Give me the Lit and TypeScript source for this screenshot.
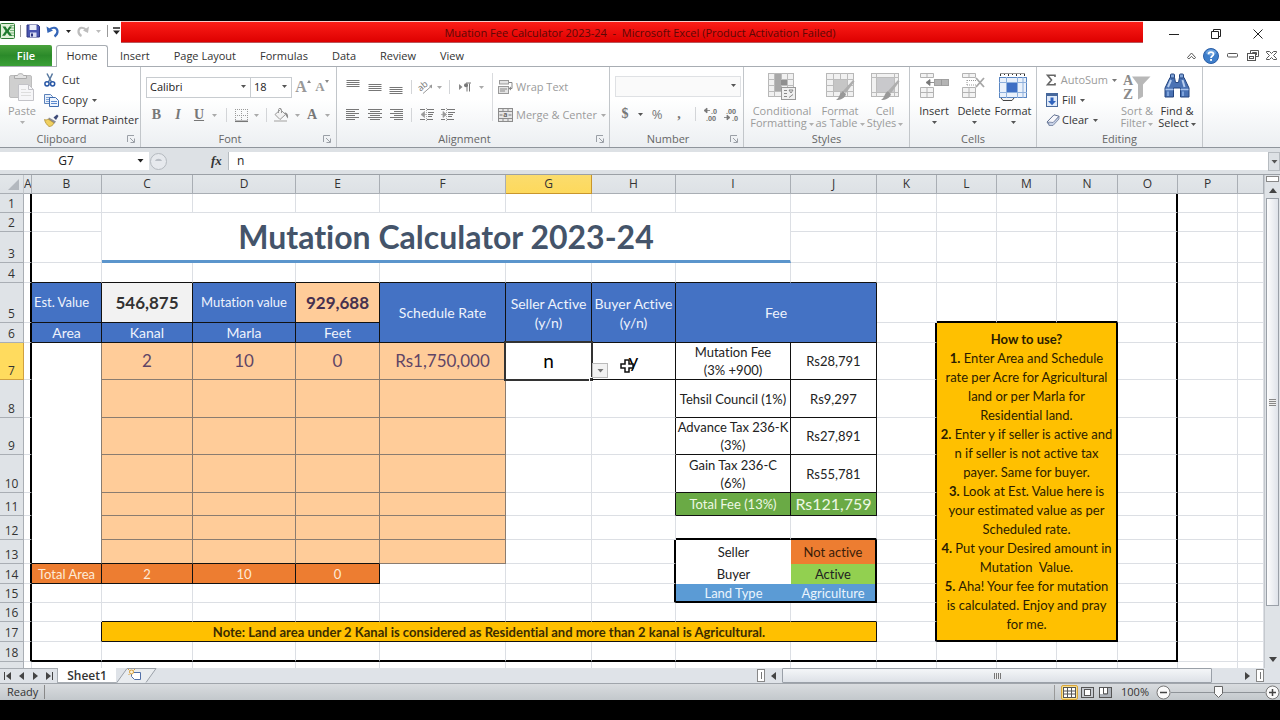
import { LitElement, html, css, svg, nothing } from "lit";
import { customElement } from "lit/decorators.js";
import { classMap } from "lit/directives/class-map.js";

/* ---------- icons ---------- */
const draw = (w: number, h: number, body: unknown) =>
  html`<svg width=${w} height=${h} viewBox="0 0 ${w} ${h}" fill="none" aria-hidden="true">${body}</svg>`;

const caret = (color = "#555") => draw(7, 4, svg`<path d="M0.500 0h6L3.500 3.600z" fill=${color} />`);
const smallCaret = (color = "#555") => draw(5, 3, svg`<path d="M0 0h5L2.500 3z" fill=${color} />`);
const hline = (x: number, y: number, w: number, c = "#777") => svg`<path d="M${x} ${y + 0.5}h${w}" stroke=${c} />`;

const alignIcon = (widths: number[], mode: "l" | "c" | "r", top: number) =>
  draw(14, 14, widths.map((w, i) => hline(mode === "l" ? 0 : mode === "c" ? (14 - w) / 2 : 14 - w, top + i * 2, w)));

const icons = {
  excel: draw(16, 16, svg`
    <rect x="0.5" y="0.5" width="14" height="15" rx="1" fill="#dff0d8" stroke="#2c7a34" />
    <path d="M10 2.5h4M10 5h4M10 7.5h4M10 10h4M10 12.500h4" stroke="#79b27c" />
    <path d="M2.500 3.500h3l1.800 3 2-3h2.600L8.700 8l3.500 4.800H9.300L7 9.700l-2 3.100H2L5.500 8z" fill="#1f7a2e" />`),
  save: draw(14, 14, svg`
    <path d="M1 1h11l1.500 1.500V13H1z" fill="#4a56b0" stroke="#2d3580" />
    <rect x="3.500" y="1" width="7" height="5" fill="#eef1fb" />
    <rect x="4" y="8.500" width="6.500" height="4.500" fill="#d8dcf2" /><rect x="5" y="9.500" width="2" height="3" fill="#2d3580" />`),
  undo: draw(14, 14, svg`
    <path d="M3 6.500C6 2.500 11 3 11.500 7c.2 2.500-1 4-3 5.500" stroke="#3566b8" stroke-width="2.200" />
    <path d="M0.500 2.500l1 6.500 5.500-2.500z" fill="#3566b8" />`),
  redo: draw(14, 14, svg`
    <path d="M10.500 6.500C7.500 2.500 3 3 2.500 7c-.2 2.500 1 4 3 5" stroke="#bdbdbd" stroke-width="2.200" />
    <path d="M13 2.500L12 9 7 6.500z" fill="#bdbdbd" />`),
  customize: draw(7, 8, svg`<path d="M0 1h7" stroke="#222" stroke-width="1.500" /><path d="M0 3.500h7L3.500 7.500z" fill="#222" />`),
  winMin: draw(10, 10, svg`<path d="M0 5.500h10" stroke="#222" />`),
  winMax: draw(10, 10, svg`<path d="M0.500 2.500h7v7h-7zM2.500 2.500v-2h7v7h-2" stroke="#222" />`),
  winClose: draw(10, 10, svg`<path d="M0.500 0.500l9 9M9.500 0.500l-9 9" stroke="#222" />`),
  chevUp: draw(9, 8, svg`<path d="M0.500 5.500L4.500 1l4 4.500-1.300 1.500-2.700-2.700L1.800 7z" stroke="#555" />`),
  help: draw(16, 16, svg`
    <circle cx="8" cy="8" r="7.500" fill="#3f7fcb" stroke="#2b5ea6" />
    <ellipse cx="8" cy="4.500" rx="5" ry="3" fill="#7fb0e6" opacity="0.700" />
    <path d="M5.500 6.200C5.500 3.400 10.500 3.400 10.500 6.200 10.500 8 8 8 8 10" stroke="#fff" stroke-width="1.700" />
    <rect x="7.100" y="11" width="1.900" height="1.900" fill="#fff" />`),
  docMin: draw(11, 5, svg`<rect x="0.500" y="0.500" width="10" height="3.500" rx="1" stroke="#555" />`),
  docMax: draw(12, 11, svg`<path d="M3.500 3.500v-3h8v6h-3" stroke="#555" /><path d="M5.500 3v-.5h4V5" stroke="#555" /><rect x="0.500" y="3.500" width="8" height="7" stroke="#555" fill="#fff" /><rect x="2.500" y="6.500" width="4" height="2" stroke="#555" />`),
  docClose: draw(11, 9, svg`<path d="M0.500 0.500h3l2 2 2-2h3v1l-3 3 3 3v1h-3l-2-2-2 2h-3v-1l3-3-3-3z" stroke="#555" />`),
  paste: draw(26, 28, svg`
    <rect x="0.500" y="2.500" width="22" height="22" rx="1.500" fill="#cfcfcf" stroke="#bdbdbd" />
    <path d="M5.500 5.500v-3h3C9 0 14 0 14.500 2.500h3v3z" fill="#e2e2e2" stroke="#aaa" />
    <path d="M9.500 11.500h10l5 5v11h-15z" fill="#f6f6f8" stroke="#c3c3c8" /><path d="M19.500 11.500v5h5" stroke="#c3c3c8" />
    <path d="M12 16.500h5M12 19.500h10M12 22.500h10" stroke="#ddd" />`),
  cut: draw(12, 14, svg`
    <path d="M3 0.500L7.500 9M8.500 0.500L4.500 9" stroke="#56779f" stroke-width="1.500" />
    <circle cx="3" cy="10.800" r="2.100" stroke="#2857a6" stroke-width="1.500" /><circle cx="8.600" cy="10.800" r="2.100" stroke="#2857a6" stroke-width="1.500" />`),
  copy: draw(15, 13, svg`
    <path d="M0.500 0.500h6l2 2v7h-8z" fill="#e8f0fb" stroke="#5c82ba" /><path d="M2 3.500h4M2 5.500h4M2 7.500h4" stroke="#7ea2d6" />
    <path d="M5.500 3.500h6l3 3v6h-9z" fill="#eef4fd" stroke="#3f6cb0" /><path d="M7 7.500h6M7 9.500h6" stroke="#5d8bd0" />`),
  painter: draw(15, 13, svg`
    <path d="M9.500 3.500L13 0.500l1.500 1.500L12 6z" fill="#3d4a78" />
    <path d="M5 3.500l7 4-1.500 2L4 5.500z" fill="#8c8c94" />
    <path d="M4 5l6 4c-1 2.500-3 3.500-5 3.500C3 11 1 8.500 0.500 5.500 2 6 3 6 4 5z" fill="#f0d060" stroke="#a8862c" stroke-width="0.700" />`),
  borders: draw(13, 13, svg`<path d="M0.500 0v12M6.500 0v12M12.500 0v12M0 0.500h13M0 6.500h13" stroke="#9a9a9a" stroke-dasharray="1 1" /><path d="M0 12.300h13" stroke="#777" stroke-width="1.500" />`),
  fill: draw(15, 14, svg`
    <path d="M1 6.500L6.500 1.500l5 5-5.500 5z" fill="#f2f2f2" stroke="#999" /><path d="M4.500 5V1.500C4.500 0 7.500 0 7.500 1.500V5" stroke="#999" />
    <path d="M10.500 4.500c3 0 4 2.500 3.500 6-1.500-1-2-3-2.500-4z" fill="#8c8c8c" /><path d="M0 13h13" stroke="#ccc" stroke-width="2" />`),
  orient: draw(18, 14, svg`
    <text x="1" y="9" font-size="9" fill="#777" transform="rotate(-40 6 7)">ab</text>
    <path d="M6 13.500L14 6.500" stroke="#999" /><path d="M15 4.500v4l-3-2.500z" fill="#999" />`),
  rtl: draw(14, 11, svg`
    <path d="M0 2v6l3.500-3z" fill="#888" /><path d="M8 1.500v8M10.500 1.500v8M7 1h5" stroke="#777" /><circle cx="7" cy="3.200" r="2" fill="#777" />`),
  outdent: draw(14, 14, svg`<path d="M0 1.500h5M7 1.500h7M8 4.500h6M8 6.500h5M8 8.500h4M0 11.500h5M7 11.500h6" stroke="#777" /><path d="M4.500 3.500L1 6.500l3.500 3zM4 6.500h3" fill="#999" stroke="#999" stroke-width="0.700" /><path d="M6.500 0v14" stroke="#aaa" stroke-dasharray="1 1" />`),
  indent: draw(14, 14, svg`<path d="M0 1.500h4M6 1.500h8M7 4.500h7M7 6.500h5M7 8.500h4M0 11.500h4M6 11.500h7" stroke="#777" /><path d="M2 3.500l3.500 3-3.500 3zM0 6.500h3" fill="#999" stroke="#999" stroke-width="0.700" /><path d="M5.500 0v14" stroke="#aaa" stroke-dasharray="1 1" />`),
  wrap: draw(15, 14, svg`
    <rect x="1.500" y="0.500" width="9" height="3.500" fill="#e4e4e4" stroke="#999" /><rect x="0.500" y="6.500" width="10" height="7" fill="#e4e4e4" stroke="#999" />
    <path d="M2 9h7M2 11h5" stroke="#888" /><path d="M11 2.500h3v6h-2" stroke="#888" /><path d="M13 6.500v4l-2.500-2z" fill="#888" />`),
  merge: draw(15, 14, svg`
    <rect x="0.500" y="0.500" width="14" height="13" fill="#e6e6e6" stroke="#8c8c8c" /><path d="M0 3.500h15M0 10.500h15M5 0v3.500M10 0v3.500M5 10.500v3.500M10 10.500v3.500" stroke="#8c8c8c" />
    <path d="M1.500 7h3M10.500 7h3" stroke="#777" /><text x="5.200" y="9.200" font-size="7" font-weight="700" fill="#666">a</text>`),
  condfmt: draw(28, 28, svg`
    <rect x="0.500" y="0.500" width="25" height="23" fill="#f1f1f1" stroke="#b8b8b8" /><path d="M0 6.500h26M0 12.500h26M0 18.500h26M6.500 0v24M13.500 0v24M19.500 0v24" stroke="#bcbcbc" />
    <rect x="7" y="1" width="6" height="17" fill="#a8a8a8" /><rect x="13" y="7" width="6" height="5" fill="#8f8f8f" />
    <rect x="13.500" y="14.500" width="14" height="12" fill="#efefef" stroke="#999" /><path d="M16 17.500h3M21 17h4l-2 3zM16 20.500h3M16 23.500h3M21 24.500l4-3" stroke="#888" />`),
  fmttable: draw(29, 28, svg`
    <rect x="0.500" y="0.500" width="27" height="23" fill="#f1f1f1" stroke="#b8b8b8" /><path d="M0 6.500h28M0 12.500h28M0 18.500h28M7.500 0v24M14.500 0v24M21.500 0v24" stroke="#bcbcbc" />
    <rect x="8" y="7" width="13" height="11" fill="#c6c6c6" />
    <path d="M27 7l1.500 1.500L20 20l-3-2z" fill="#aeaeae" /><path d="M17 18l3 3c-1 4-5 6-10 6 4-2 3-7 7-9z" fill="#989898" />`),
  cellstyles: draw(29, 28, svg`
    <rect x="0.500" y="0.500" width="27" height="23" fill="#f1f1f1" stroke="#b8b8b8" /><path d="M0 4.500h28M0 19.500h28M5.500 0v24M23.500 0v24" stroke="#bcbcbc" />
    <rect x="6" y="5" width="17" height="14" fill="#c9c9cc" />
    <path d="M27 7l1.500 1.500L20 20l-3-2z" fill="#aeaeae" /><path d="M17 18l3 3c-1 4-5 6-10 6 4-2 3-7 7-9z" fill="#989898" />`),
  insert: draw(29, 26, svg`
    <path d="M0.500 0.500h13v4h-13zM7 0.500v4M0.500 14.500h13v10h-13zM7 14.500v10M0.500 19.500h13" fill="#f3f3f3" stroke="#b3b3b3" />
    <rect x="14.500" y="6.500" width="14" height="6" fill="#b4b4b4" stroke="#a0a0a0" /><path d="M21.500 6.500v6" stroke="#999" /><path d="M9 9.500h5M6 9.500l4-3v6z" fill="#777" stroke="#777" stroke-width="0.800" />`),
  delete: draw(24, 26, svg`
    <path d="M0.500 0.500h13v4h-13zM7 0.500v4M0.500 14.500h13v10h-13zM7 14.500v10M0.500 19.500h13" fill="#f3f3f3" stroke="#b3b3b3" />
    <path d="M5 7v5M5 7.500h9M5 12h9" stroke="#999" stroke-dasharray="1 1" /><path d="M14 5l8 9M22 5l-8 9" stroke="#a6a6a6" stroke-width="1.800" />`),
  format: draw(29, 28, svg`
    <path d="M1.500 0v3M5.500 0v2M9.500 0v3M13.500 0v2M17.500 0v3M21.500 0v2M25.500 0v3" stroke="#333" /><path d="M1 0.500h25" stroke="#999" />
    <rect x="0.500" y="4.500" width="27" height="20" fill="#eaf1fb" stroke="#5a86c2" /><path d="M0 9.500h28M0 19.500h28M7.500 4v21M18.500 4v21M24 4v21" stroke="#8fb0dc" />
    <rect x="8" y="10" width="10" height="9" fill="#3f6fc4" /><path d="M2 25l2 2.500h9l2-2.500" fill="#f4f4f4" stroke="#444" />`),
  sum: draw(10, 12, svg`<path d="M9 3V1.200H1.500L5.500 6l-4 4.800H9V9" stroke="#666" stroke-width="1.600" />`),
  filldown: draw(12, 14, svg`<rect x="0.500" y="0.500" width="11" height="13" fill="#dfe9f8" stroke="#47689c" /><path d="M1 2h10" stroke="#47689c" stroke-width="2" /><path d="M4.500 4.500h3v3.500H10L6 12.300 2 8h2.500z" fill="#2f63bd" />`),
  eraser: draw(14, 12, svg`<path d="M1 8L8 0.800l5 1.400-6.500 8H2.500z" fill="#f7f7fb" stroke="#5f6f90" /><path d="M2.500 8l4.500.5L13 2.500v2.500L7 11.500H3z" fill="#c8d2e6" stroke="#5f6f90" stroke-width="0.700" />`),
  sort: draw(28, 28, svg`
    <path d="M9 3.500h18.500l-7.500 8v12l-5 3v-15z" fill="#b8b8b8" />
    <text x="0" y="12" font-size="14" font-weight="700" font-family="Liberation Serif, serif" fill="#8a8a8a">A</text>
    <text x="0" y="26" font-size="15" font-weight="700" font-family="Liberation Serif, serif" fill="#8a8a8a">Z</text>`),
  find: draw(28, 26, svg`
    <path d="M7 4.500h4.500l1 5h3l1-5H21l5 10.500v9h-8.500V15h-7v9H2v-9z" fill="#4a72b4" stroke="#24457f" />
    <rect x="7.500" y="1" width="4" height="4" rx="1" fill="#7fa3d8" stroke="#24457f" /><rect x="16.500" y="1" width="4" height="4" rx="1" fill="#7fa3d8" stroke="#24457f" />
    <path d="M8 7l-3 7M19.500 7l2 7" stroke="#b6cdee" stroke-width="2" /><path d="M2.500 16.500h8M17.500 16.500h8" stroke="#a8c2ea" stroke-width="1.500" /><path d="M5 18.500v4.500M20 18.500v4.500" stroke="#7ea3db" stroke-width="2" />`),
  launcher: draw(8, 8, svg`<path d="M0.500 7V0.500H7" stroke="#9a9fa6" /><path d="M3 3l4 4M7.500 3.500v4h-4" stroke="#9a9fa6" />`),
  cancelFx: draw(72, 19, svg`<circle cx="9.500" cy="9.500" r="8" fill="#e6e9ed" stroke="#b4b9bf" /><path d="M6 9c1-3 6-3 7 0z" fill="#b9bec5" />`),
  corner: draw(11, 11, svg`<path d="M11 0v11H0z" fill="#b3b8be" />`),
  newTab: draw(42, 15, svg`
    <path d="M0.500 15L11 0.500h29L30 14.500" fill="#e9ecef" stroke="#9aa0a8" />
    <path d="M15.500 4.500h9v7h-6l-3-3z" fill="#fff" stroke="#5270a8" /><circle cx="15.500" cy="4" r="2" fill="#fff3d6" stroke="#d9a13c" /><path d="M12 1l1.500 1.500M19 1l-1.500 1.500M12.500 7l1-1" stroke="#d9a13c" />`),
  cursor: draw(14, 14, svg`<path d="M5 1h4v4h4v4H9v4H5V9H1V5h4z" fill="#fff" stroke="#111" stroke-width="1.500" />`),
  viewGrid: draw(13, 11, svg`<rect x="0.500" y="0.500" width="12" height="10" fill="#fff" stroke="#555" /><path d="M0 4h13M0 7h13M4.500 0v11M8.500 0v11" stroke="#555" />`),
  viewPage: draw(13, 11, svg`<rect x="0.500" y="0.500" width="12" height="10" fill="#c8ccd1" stroke="#555" /><rect x="3.500" y="2.500" width="6" height="6" fill="#fff" stroke="#555" />`),
  viewBreak: draw(13, 11, svg`<rect x="0.500" y="0.500" width="12" height="10" fill="#aeb3ba" stroke="#555" /><path d="M1 1h3v6H1zM5 1h3v5H5z" fill="#fff" /><path d="M4.500 0v7h4V0" stroke="#555" />`),
  minus: draw(15, 15, svg`<circle cx="7.500" cy="7.500" r="6.500" fill="#fafafa" stroke="#777" /><path d="M4 7.500h7" stroke="#444" stroke-width="1.500" />`),
  plus: draw(15, 15, svg`<circle cx="7.500" cy="7.500" r="6.500" fill="#fafafa" stroke="#777" /><path d="M4 7.500h7M7.500 4v7" stroke="#444" stroke-width="1.500" />`),
  thumb: draw(9, 12, svg`<path d="M0.500 0.500h8v7l-4 4-4-4z" fill="#fafafa" stroke="#666" />`),
  up: draw(8, 5, svg`<path d="M0 5l4-5 4 5z" fill="#444" />`),
  down: draw(8, 5, svg`<path d="M0 0l4 5 4-5z" fill="#444" />`),
  left: draw(5, 8, svg`<path d="M5 0L0 4l5 4z" fill="#444" />`),
  right: draw(5, 8, svg`<path d="M0 0l5 4-5 4z" fill="#444" />`),
  first: draw(7, 8, svg`<path d="M0.500 0v8" stroke="#444" /><path d="M7 0L2 4l5 4z" fill="#444" />`),
  last: draw(7, 8, svg`<path d="M6.500 0v8" stroke="#444" /><path d="M0 0l5 4-5 4z" fill="#444" />`),
  decInc: draw(15, 14, svg`<path d="M1 3.500h5M0 3.500l3-2.500v5z" fill="#777" stroke="#777" stroke-width="0.800" /><text x="7" y="6.500" font-size="7" font-weight="700" fill="#777">.0</text><text x="2" y="13.500" font-size="7" font-weight="700" fill="#777">.00</text>`),
  decDec: draw(15, 14, svg`<text x="2" y="6.500" font-size="7" font-weight="700" fill="#777">.00</text><path d="M0 10.500h4M6 10.500L3 8v5z" fill="#777" stroke="#777" stroke-width="0.800" /><text x="8" y="13.500" font-size="7" font-weight="700" fill="#777">.0</text>`),
};

/* ---------- sheet model ---------- */
const COLS: [string, number][] = [
  ["A", 8], ["B", 70], ["C", 91], ["D", 103], ["E", 84], ["F", 126], ["G", 86], ["H", 84], ["I", 115],
  ["J", 86], ["K", 60], ["L", 60], ["M", 60], ["N", 61], ["O", 60], ["P", 60],
];
const ROWS = [19, 19, 31, 20, 40, 20, 37, 38, 37, 38, 23, 24, 24, 20, 19, 19, 20, 20, 20];

interface Cell { t?: unknown; k?: string; cs?: number; rs?: number }

const howTo = html`<b>How to use?</b>
<b>1.</b> Enter Area and Schedule
rate per Acre for Agricultural
land or per Marla for
Residential land.
<b>2.</b> Enter y if seller is active and
n if seller is not active tax
payer. Same for buyer.
<b>3.</b> Look at Est. Value here is
your estimated value as per
Scheduled rate.
<b>4.</b> Put your Desired amount in
Mutation  Value.
<b>5.</b> Aha! Your fee for mutation
is calculated. Enjoy and pray
for me.`;

const CELLS: Record<string, Cell> = {
  C2: { t: "Mutation Calculator 2023-24", k: "title", cs: 7, rs: 2 },
  B5: { t: "Est. Value", k: "blue compact start" },
  C5: { t: "546,875", k: "est" },
  D5: { t: "Mutation value", k: "blue compact" },
  E5: { t: "929,688", k: "mut" },
  F5: { t: "Schedule Rate", k: "blue", rs: 2 },
  G5: { t: "Seller Active\n(y/n)", k: "blue", rs: 2 },
  H5: { t: "Buyer Active\n(y/n)", k: "blue", rs: 2 },
  I5: { t: "Fee", k: "blue", cs: 2, rs: 2 },
  B6: { t: "Area", k: "blue" },
  C6: { t: "Kanal", k: "blue" },
  D6: { t: "Marla", k: "blue" },
  E6: { t: "Feet", k: "blue" },
  L6: { t: howTo, k: "howto", cs: 3, rs: 12 },
  C7: { t: "2", k: "entry" },
  D7: { t: "10", k: "entry" },
  E7: { t: "0", k: "entry" },
  F7: { t: "Rs1,750,000", k: "entry" },
  G7: {
    t: html`n<span class="selection"></span><span class="handle"></span
      ><button class="picker" aria-label="Pick from list">${caret("#777")}</button>`,
    k: "answer",
  },
  H7: { t: html`y<span class="cursor">${icons.cursor}</span>`, k: "answer" },
  I7: { t: "Mutation Fee\n(3% +900)", k: "fee" },
  J7: { t: "Rs28,791", k: "fee" },
  I8: { t: "Tehsil Council (1%)", k: "fee" },
  J8: { t: "Rs9,297", k: "fee" },
  I9: { t: "Advance Tax 236-K\n(3%)", k: "fee" },
  J9: { t: "Rs27,891", k: "fee" },
  I10: { t: "Gain Tax 236-C\n(6%)", k: "fee" },
  J10: { t: "Rs55,781", k: "fee" },
  I11: { t: "Total Fee (13%)", k: "total" },
  J11: { t: "Rs121,759", k: "total sum" },
  I13: { t: "Seller" },
  J13: { t: "Not active", k: "orange dark" },
  B14: { t: "Total Area", k: "orange" },
  C14: { t: "2", k: "orange" },
  D14: { t: "10", k: "orange" },
  E14: { t: "0", k: "orange" },
  I14: { t: "Buyer" },
  J14: { t: "Active", k: "lime" },
  I15: { t: "Land Type", k: "sky" },
  J15: { t: "Agriculture", k: "sky" },
  C17: { t: "Note: Land area under 2 Kanal is considered as Residential and more than 2 kanal is Agricultural.", k: "note", cs: 8 },
};

/* Border rules per range: b = bottom edge, r = right edge; 0 none, 1 thin, 2 thick, g grey. */
const EDGES: [string, string][] = [
  ["A1:A18", "r2"], ["O1:O18", "r2"], ["B18:O18", "b2"],
  ["B4:J4", "b1"], ["B5:J6", "r1 b1"],
  ["B7:B13", "b0 rg"], ["C7:F13", "rg bg"], ["B13:E13", "b1"],
  ["G7:G7", "b1 rg"], ["H7:H7", "b1"], ["H7:H11", "r1"], ["I7:J11", "r1 b1"],
  ["B14:E14", "r1 b1"],
  ["H13:H15", "r2"], ["I12:J12", "b2"], ["I13:I15", "r0"], ["I13:J14", "b0"], ["J13:J15", "r2"], ["I15:J15", "b2"],
  ["B17:B17", "r1"], ["C16:J16", "b1"], ["C17:C17", "r1 b1"],
  ["K6:K17", "r2"], ["L5:N5", "b2"], ["L6:L6", "r2 b2"],
];

const colIndex = (c: string) => c.charCodeAt(0) - 65;
const parse = (ref: string): [number, number] => [colIndex(ref[0]), Number(ref.slice(1))];

function edgesFor(c: number, r: number) {
  let right = "", bottom = "";
  for (const [range, rule] of EDGES) {
    const [[c1, r1], [c2, r2]] = range.split(":").map(parse);
    if (c < c1 || c > c2 || r < r1 || r > r2) continue;
    for (const e of rule.split(" ")) e[0] === "r" ? (right = e) : (bottom = e);
  }
  return `${right} ${bottom}`;
}

const covered = new Set<string>();
for (const [ref, cell] of Object.entries(CELLS)) {
  const [c, r] = parse(ref);
  for (let y = r; y < r + (cell.rs ?? 1); y++)
    for (let x = c; x < c + (cell.cs ?? 1); x++) if (x !== c || y !== r) covered.add(`${x},${y}`);
}

/* ---------- spreadsheet ---------- */
@customElement("sheet-grid")
class SheetGrid extends LitElement {
  static styles = css`
    :host { display: block; flex: 1; min-width: 0; overflow: hidden; background: #fff; font-variant-ligatures: none; }
    table { width: 100%; table-layout: fixed; border-collapse: separate; border-spacing: 0; font: 13px/18px Lato, "Open Sans", sans-serif; font-variant-ligatures: none; color: #222; }
    .rowcol { width: 24px; }
    th, td { box-sizing: border-box; padding: 0; overflow: hidden; white-space: pre; text-align: center; vertical-align: middle; border: 0 solid #dcdfe4; border-width: 0 1px 1px 0; }
    thead th { height: 19px; background: linear-gradient(#e3e7ea, #dde1e5); border-color: #a9aeb4; font: 12px/16px "Open Sans", sans-serif; color: #333; }
    thead .corner { text-align: right; vertical-align: bottom; line-height: 0; border-right-color: #c3c7cb; padding: 0 4px 3px 0; }
    thead .on { background: linear-gradient(#fbdc6d, #fdd95c); border-color: #c9962c; }
    tbody th { background: #dfe3e7; border-color: #a9aeb4; font: 12px/16px "Open Sans", sans-serif; color: #333; vertical-align: bottom; }
    tbody th.on { background: #ffdb5e; border-color: #d0a040; }
    .r0 { border-right-width: 0; }
    .r1 { border-right-color: #111; }
    .rg { border-right-color: #8a7c70; }
    .r2 { border-right: 2px solid #000; }
    .b0 { border-bottom-width: 0; }
    .b1 { border-bottom-color: #111; }
    .bg { border-bottom-color: #8a7c70; }
    .b2 { border-bottom: 2px solid #000; }
    .title { font-size: 32px; line-height: 40px; font-weight: 700; color: #44546a; border-bottom: 3px solid #5b95cc; }
    .blue { background: #4472c4; color: #eef3fc; font-size: 14px; line-height: 19px; }
    .compact { font-size: 13px; }
    .start { text-align: left; padding-left: 2px; }
    .est { background: #f2f2f2; color: #333; font-size: 17px; font-weight: 700; }
    .mut { background: #ffcc99; color: #46304f; font-size: 17px; font-weight: 700; }
    .peach { background: #ffcc99; }
    .entry { background: #ffcc99; color: #5f4566; font-size: 17px; }
    .answer { font-size: 19px; color: #000; position: relative; overflow: visible; }
    .total { background: #6aaa45; color: #eef8e4; }
    .sum { font-size: 16px; }
    .orange { background: #ed7d31; color: #fdebd8; }
    .dark { color: #3a1c08; }
    .lime { background: #92d050; }
    .sky { background: #5b9bd5; color: #eaf4fd; line-height: 16px; }
    .note { background: #ffc000; color: #3a2c00; font-weight: 700; }
    .howto { background: #ffc000; color: #2b1c00; line-height: 19px; }
    .selection { position: absolute; inset: -2px; border: 2px solid #333; }
    .handle { position: absolute; right: -3px; bottom: -3px; width: 3px; height: 3px; background: #333; border: 1px solid #fff; }
    .picker { position: absolute; left: 100%; bottom: 1px; width: 16px; height: 15px; padding: 0; margin-left: 1px; border: 1px solid #bbb; background: #f2f2f2; display: grid; place-items: center; z-index: 1; }
    .cursor { position: absolute; left: 28px; top: 16px; line-height: 0; }
  `;

  private row(h: number, i: number) {
    const r = i + 1;
    return html`<tr style="height:${h}px">
      <th scope="row" class=${classMap({ on: r === 7 })}>${r}</th>
      ${COLS.map(([name], c) => {
        if (covered.has(`${c},${r}`)) return nothing;
        const cell = CELLS[name + r] ?? {};
        const blank = c >= 2 && c <= 5 && r >= 8 && r <= 13 ? "peach" : "";
        return html`<td class="${cell.k ?? blank} ${edgesFor(c, r)}" colspan=${cell.cs ?? 1} rowspan=${cell.rs ?? 1}>${cell.t ?? nothing}</td>`;
      })}
      <td></td>
    </tr>`;
  }

  render() {
    return html`<table>
      <colgroup>
        <col class="rowcol" />
        ${COLS.map(([, w]) => html`<col style="width:${w}px" />`)}
        <col />
      </colgroup>
      <thead>
        <tr>
          <th class="corner">${icons.corner}</th>
          ${COLS.map(([n]) => html`<th scope="col" class=${classMap({ on: n === "G" })}>${n}</th>`)}
          <th></th>
        </tr>
      </thead>
      <tbody>${ROWS.map((h, i) => this.row(h, i))}</tbody>
    </table>`;
  }
}

/* ---------- ribbon ---------- */
@customElement("excel-ribbon")
class ExcelRibbon extends LitElement {
  static styles = css`
    :host { display: flex; height: 80px; background: linear-gradient(#fff 40%, #eceff2); border-bottom: 1px solid #8f959c; font: 11px/14px "Open Sans", sans-serif; color: #333; }
    button { all: unset; box-sizing: border-box; }
    svg { display: block; overflow: visible; }
    .group { box-sizing: border-box; display: flex; flex-direction: column; border-right: 1px solid #c2c6ca; }
    .body { flex: 1; display: flex; min-height: 0; }
    .label { position: relative; height: 17px; line-height: 17px; text-align: center; color: #666; padding-right: 17px; }
    .label.plain { padding-right: 0; }
    .launch { position: absolute; right: 5px; top: 5px; }
    .clipboard { width: 141px; }
    .font { width: 196px; }
    .alignment { width: 273px; }
    .number { width: 134px; }
    .styles { width: 166px; }
    .cells { width: 127px; }
    .editing { width: 166px; }
    .big { display: flex; flex-direction: column; align-items: center; text-align: center; line-height: 12px; white-space: pre; padding-top: 6px; width: 100%; }
    .big .pic { height: 32px; }
    .big .c { display: inline-block; vertical-align: middle; margin-left: 2px; }
    .off { color: #9b9b9b; }
    .paste { width: 44px; }
    .stack { display: flex; flex-direction: column; padding-top: 3px; }
    .line { display: flex; align-items: center; height: 20px; white-space: nowrap; }
    .line .pic { width: 18px; display: grid; place-items: center start; }
    .line .c { margin-left: 4px; }
    .rows { display: flex; flex-direction: column; gap: 6px; padding: 9px 0 0 5px; }
    .tools { display: grid; align-items: center; justify-items: center; height: 22px; }
    .f1 { grid-template-columns: 105px 41px 22px 16px; }
    .f2 { grid-template-columns: 21px 22px 20px 10px 14px 16px 14px 6px 24px 8px 22px 8px; }
    .a1 { grid-template-columns: 22px 22px 20px 10px 20px 6px 14px 20px 10px; }
    .a2 { grid-template-columns: 22px 22px 20px 10px 22px 20px; }
    .n2 { grid-template-columns: 20px 10px 24px 20px 12px 20px 20px; }
    .combo { position: relative; width: 100%; height: 21px; }
    .combo select { appearance: none; box-sizing: border-box; width: 100%; height: 21px; border: 1px solid #c8ccd0; border-radius: 0; background: #fff; font: inherit; color: #222; padding: 0 3px; opacity: 1; }
    .combo select:disabled { background: #fafafa; border-color: #dfe1e4; }
    .combo .arrow { position: absolute; right: 5px; top: 8px; pointer-events: none; }
    .f1 .combo + .combo select { border-left: 0; }
    .sep { width: 1px; height: 14px; background: #d3d5d8; }
    .tall { width: 1px; height: 48px; margin: 6px 5px 0 6px; background: #d9dbde; }
    .serif { font: 700 14px/16px "Liberation Serif", serif; color: #777; }
    .it { font-style: italic; }
    .un { text-decoration: underline; }
    .grow, .shrink { display: flex; font: 700 16px/20px "Liberation Serif", serif; color: #999; }
    .shrink { font-size: 13px; }
    .sup { padding-top: 3px; }
    .glyph { font-size: 13px; color: #777; }
    .wrapcol { display: flex; flex-direction: column; gap: 6px; padding-top: 9px; }
    .wrapcol .line { height: 22px; }
    .grid-s { display: grid; grid-template-columns: 66px 50px 40px; padding-left: 5px; align-items: start; }
    .grid-c { display: grid; grid-template-columns: 40px 40px 38px; padding-left: 4px; align-items: start; }
    .e-left { width: 80px; box-sizing: border-box; padding-left: 9px; }
    .e-left .pic { width: 16px; }
    .e-btn { width: 40px; }
    .down { margin-top: 4px; }
  `;

  private label(text: string, launcher = true) {
    return html`<div class="label ${launcher ? "" : "plain"}">${text}${launcher ? html`<button class="launch" aria-label="${text} options">${icons.launcher}</button>` : nothing}</div>`;
  }
  private line(icon: unknown, text: string, arrow = "", off = false) {
    return html`<button class="line ${off ? "off" : ""}"><span class="pic">${icon}</span>${text}${arrow ? html`<span class="c">${smallCaret(arrow)}</span>` : nothing}</button>`;
  }
  private big(icon: unknown, lines: string[], off: boolean, below = false) {
    const color = off ? "#b0b0b0" : "#555";
    return html`<button class="big ${off ? "off" : ""}"><span class="pic">${icon}</span><span>${lines[0]}</span>${below
      ? html`<span class="down">${smallCaret(color)}</span>`
      : html`<span>${lines[1]}<span class="c">${smallCaret(color)}</span></span>`}</button>`;
  }

  render() {
    const sep = html`<span class="sep"></span>`;
    const dim = "#aaa";
    return html`
      <section class="group clipboard">
        <div class="body">
          <div class="paste">${this.big(icons.paste, ["Paste"], true, true)}</div>
          <div class="stack">
            ${this.line(icons.cut, "Cut")} ${this.line(icons.copy, "Copy", "#555")} ${this.line(icons.painter, "Format Painter")}
          </div>
        </div>
        ${this.label("Clipboard")}
      </section>
      <section class="group font">
        <div class="body"><div class="rows">
          <div class="tools f1">
            <div class="combo"><select aria-label="Font"><option>Calibri</option></select><span class="arrow">${smallCaret()}</span></div>
            <div class="combo"><select aria-label="Font size"><option>18</option></select><span class="arrow">${smallCaret()}</span></div>
            <button class="grow" aria-label="Grow font">A<span class="sup">${draw(4, 3, svg`<path d="M0 3l2-3 2 3z" fill="#888" />`)}</span></button>
            <button class="shrink" aria-label="Shrink font">A<span class="sup">${draw(4, 3, svg`<path d="M0 0l2 3 2-3z" fill="#888" />`)}</span></button>
          </div>
          <div class="tools f2">
            <button class="serif">B</button><button class="serif it">I</button><button class="serif un">U</button>${smallCaret(dim)}${sep}
            <button aria-label="Borders">${icons.borders}</button>${smallCaret(dim)}${sep}
            <button aria-label="Fill color">${icons.fill}</button>${smallCaret(dim)}
            <button class="serif">A</button>${smallCaret(dim)}
          </div>
        </div></div>
        ${this.label("Font")}
      </section>
      <section class="group alignment">
        <div class="body">
          <div class="rows">
            <div class="tools a1">
              <button aria-label="Top align">${alignIcon([13, 13, 13, 13], "c", 0)}</button>
              <button aria-label="Middle align">${alignIcon([13, 13, 13, 13], "c", 4)}</button>
              <button aria-label="Bottom align">${alignIcon([13, 13, 13, 13], "c", 7)}</button>${sep}
              <button aria-label="Orientation">${icons.orient}</button>${smallCaret(dim)}${sep}
              <button aria-label="Text direction">${icons.rtl}</button>${smallCaret(dim)}
            </div>
            <div class="tools a2">
              <button aria-label="Align left">${alignIcon([13, 9, 13, 9, 13, 9], "l", 1)}</button>
              <button aria-label="Center">${alignIcon([14, 10, 14, 10, 14, 10], "c", 1)}</button>
              <button aria-label="Align right">${alignIcon([13, 9, 13, 9, 13, 9], "r", 1)}</button>${sep}
              <button aria-label="Decrease indent">${icons.outdent}</button>
              <button aria-label="Increase indent">${icons.indent}</button>
            </div>
          </div>
          <span class="tall"></span>
          <div class="wrapcol">
            ${this.line(icons.wrap, "Wrap Text", "", true)} ${this.line(icons.merge, "Merge & Center", dim, true)}
          </div>
        </div>
        ${this.label("Alignment")}
      </section>
      <section class="group number">
        <div class="body"><div class="rows">
          <div class="combo"><select aria-label="Number format" disabled><option></option></select><span class="arrow">${smallCaret()}</span></div>
          <div class="tools n2">
            <button class="serif">$</button>${smallCaret()}<button class="glyph">%</button><button class="serif">,</button>${sep}
            <button aria-label="Increase decimal">${icons.decInc}</button><button aria-label="Decrease decimal">${icons.decDec}</button>
          </div>
        </div></div>
        ${this.label("Number")}
      </section>
      <section class="group styles">
        <div class="body grid-s">
          ${this.big(icons.condfmt, ["Conditional", "Formatting"], true)} ${this.big(icons.fmttable, ["Format", "as Table"], true)}
          ${this.big(icons.cellstyles, ["Cell", "Styles"], true)}
        </div>
        ${this.label("Styles", false)}
      </section>
      <section class="group cells">
        <div class="body grid-c">
          ${this.big(icons.insert, ["Insert"], false, true)} ${this.big(icons.delete, ["Delete"], false, true)}
          ${this.big(icons.format, ["Format"], false, true)}
        </div>
        ${this.label("Cells", false)}
      </section>
      <section class="group editing">
        <div class="body">
          <div class="stack e-left">
            ${this.line(icons.sum, "AutoSum", "#777", true)} ${this.line(icons.filldown, "Fill", "#555")} ${this.line(icons.eraser, "Clear", "#555")}
          </div>
          <div class="e-btn">${this.big(icons.sort, ["Sort &", "Filter"], true)}</div>
          <div class="e-btn">${this.big(icons.find, ["Find &", "Select"], false)}</div>
        </div>
        ${this.label("Editing", false)}
      </section>
    `;
  }
}

/* ---------- window ---------- */
@customElement("app-root")
class AppRoot extends LitElement {
  static styles = css`
    :host { display: flex; flex-direction: column; box-sizing: border-box; height: 100vh; padding: 21px 0 20px; background: #000; font: 11px/14px "Open Sans", sans-serif; color: #333; overflow: hidden; }
    button { all: unset; box-sizing: border-box; }
    svg { display: block; }
    .titlebar { display: flex; height: 24px; background: #fff; }
    .quick { display: grid; grid-template-columns: 16px 8px 18px 22px 8px 22px 8px 10px 8px; align-items: center; justify-items: center; width: 121px; box-sizing: border-box; height: 20px; }
    .vsep { width: 1px; height: 12px; background: #999; }
    .caption { flex: 1; height: 22px; box-sizing: border-box; border-bottom: 1px solid #b8585c; border-top: 1px solid #f7c9c9; background: linear-gradient(#fb1d17, #dd0000); color: #5c0806; text-align: center; padding-left: 16px; line-height: 22px; white-space: pre; }
    .winbtns { display: grid; grid-template-columns: 42px 42px 42px; place-items: center; width: 137px; height: 26px; box-sizing: border-box; padding: 0 0 0 10px; }
    .tabs { display: flex; height: 22px; background: #fff; border-bottom: 1px solid #a8adb3; box-sizing: border-box; }
    .tabs a { color: #333; text-decoration: none; padding: 0 12px; line-height: 21px; }
    .tabs .file { width: 52px; box-sizing: border-box; padding: 0; text-align: center; background: linear-gradient(#4aa23c, #2b8a2a 50%, #3aa036); color: #fff; font-weight: 600; border-radius: 0 2px 0 0; }
    .tabs .home { width: 52px; box-sizing: border-box; padding: 0; height: 22px; margin: 0 0 0 4px; border: 1px solid #a8adb3; border-bottom: 0; border-radius: 3px 3px 0 0; text-align: center; background: #fff; line-height: 20px; }
    .tabtools { margin-left: auto; display: grid; grid-template-columns: 20px 20px 22px 20px 17px; place-items: center; }
    .formula { display: flex; box-sizing: border-box; height: 27px; padding: 4px 0 4px; background: #dde1e5; border-bottom: 1px solid #9ba0a6; }
    .formula input { box-sizing: border-box; border: 0; border-radius: 0; background: #fff; height: 18px; padding: 0; font: 12px/18px "Open Sans", sans-serif; color: #222; }
    .namebox { position: relative; width: 149px; }
    .namebox input { width: 149px; padding-right: 17px; text-align: center; }
    .namebox span { position: absolute; right: 5px; top: 7px; }
    .fx { display: flex; width: 80px; height: 18px; border-right: 1px solid #b6bbc0; box-sizing: border-box; }
    .fx b { font: italic 700 13px/18px "Liberation Serif", serif; margin-left: -10px; }
    .formula .value { flex: 1; min-width: 0; padding-left: 8px; }
    .expand { width: 12px; height: 19px; border: 1px solid #b6bbc0; display: grid; place-items: center; }
    .work { flex: 1; min-height: 0; display: flex; }
    .vscroll { width: 16px; background: #dfe3e7; display: flex; flex-direction: column; align-items: center; border-left: 1px solid #c5c9ce; box-sizing: border-box; }
    .split { width: 13px; height: 6px; border: 1px solid #888; background: #fff; box-sizing: border-box; margin: 1px 0 6px; }
    .vthumb { width: 13px; flex: 1; margin: 5px 0 51px; box-sizing: border-box; border: 1px solid #9aa0a8; background: linear-gradient(90deg, #fdfdfd, #dfe3ea); display: grid; place-items: center; }
    .vthumb i { width: 7px; height: 7px; background: repeating-linear-gradient(#888 0 1px, #eee 1px 2px); }
    .vscroll .dn { margin-bottom: 6px; }
    .bottom { display: flex; height: 15px; background: #dfe3e8; }
    .nav { display: grid; grid-template-columns: repeat(4, 14px); place-items: center; width: 58px; box-sizing: border-box; border-right: 1px solid #a8adb3; border-top: 1px solid #a8adb3; }
    .sheet { box-sizing: border-box; width: 58px; background: #fff; font: 600 12px/15px "Open Sans", sans-serif; text-align: center; border-bottom: 1px solid #a8adb3; }
    .left { display: flex; flex: 1; }
    .hscroll { width: 507px; display: flex; align-items: center; gap: 6px; }
    .hsplit { box-sizing: border-box; width: 8px; height: 13px; border: 1px solid #888; background: #fff; display: grid; place-items: center; }
    .hsplit i { width: 1px; height: 7px; background: #777; }
    .hthumb { box-sizing: border-box; width: 430px; height: 15px; border: 1px solid #9aa0a8; border-radius: 1px; background: linear-gradient(#f4f6f8, #dde1e7); display: grid; place-items: center; }
    .hthumb i { width: 7px; height: 6px; background: repeating-linear-gradient(90deg, #777 0 1px, #eee 1px 2px); }
    .hscroll .rt { margin: 0 0 0 auto; }
    .cornerbox { width: 16px; }
    .status { display: flex; align-items: center; height: 17px; box-sizing: border-box; border-top: 1px solid #a0a5ab; background: linear-gradient(#d9dcdf, #c3c8cc); }
    .ready { width: 45px; box-sizing: border-box; padding-left: 7px; border-right: 1px solid #888; }
    .views { margin-left: auto; display: grid; grid-template-columns: 18px 18px 18px; place-items: center; border-left: 1px solid #999; padding-left: 5px; height: 15px; }
    .views .cur { background: #fbe08a; border: 1px solid #d8a53a; border-radius: 2px; padding: 1px; }
    .pct { width: 42px; text-align: center; }
    .zoomer { display: flex; align-items: center; }
    .track { position: relative; width: 94px; height: 1px; background: #8e9398; }
    .track span { position: absolute; left: 43px; top: -6px; }
    a:focus-visible, button:focus-visible { outline: 1px solid #3566b8; }
  `;

  render() {
    return html`
      <header class="titlebar">
        <div class="quick">
          ${icons.excel}<span class="vsep"></span><button aria-label="Save">${icons.save}</button><button aria-label="Undo">${icons.undo}</button>${smallCaret("#222")}
          <button aria-label="Redo">${icons.redo}</button>${smallCaret("#bbb")}<span class="vsep"></span><button aria-label="Customize">${icons.customize}</button>
        </div>
        <div class="caption">Muation Fee Calculator 2023-24  -  Microsoft Excel (Product Activation Failed)</div>
        <div class="winbtns">
          <button aria-label="Minimize">${icons.winMin}</button><button aria-label="Restore">${icons.winMax}</button><button aria-label="Close">${icons.winClose}</button>
        </div>
      </header>
      <nav class="tabs">
        <a class="file" href="#file">File</a><a class="home" href="#home">Home</a>
        ${["Insert", "Page Layout", "Formulas", "Data", "Review", "View"].map((t) => html`<a href="#tab">${t}</a>`)}
        <div class="tabtools">
          <button aria-label="Collapse ribbon">${icons.chevUp}</button><button aria-label="Help">${icons.help}</button>
          <button aria-label="Minimize workbook">${icons.docMin}</button><button aria-label="Restore workbook">${icons.docMax}</button>
          <button aria-label="Close workbook">${icons.docClose}</button>
        </div>
      </nav>
      <excel-ribbon></excel-ribbon>
      <div class="formula">
        <div class="namebox"><input aria-label="Name box" .value=${"G7"} /><span>${caret("#222")}</span></div>
        <div class="fx">${icons.cancelFx}<b>fx</b></div>
        <input class="value" aria-label="Formula bar" .value=${"n"} />
        <button class="expand" aria-label="Expand formula bar">${caret("#555")}</button>
      </div>
      <main class="work">
        <sheet-grid></sheet-grid>
        <div class="vscroll">
          <span class="split"></span>${icons.up}<span class="vthumb"><i></i></span><span class="dn">${icons.down}</span>
        </div>
      </main>
      <div class="bottom">
        <div class="left">
          <div class="nav">
            <button aria-label="First sheet">${icons.first}</button><button aria-label="Previous sheet">${icons.left}</button>
            <button aria-label="Next sheet">${icons.right}</button><button aria-label="Last sheet">${icons.last}</button>
          </div>
          <button class="sheet">Sheet1</button>
          <button aria-label="New sheet">${icons.newTab}</button>
        </div>
        <div class="hscroll">
          <span class="hsplit"><i></i></span>${icons.left}<span class="hthumb"><i></i></span><span class="rt">${icons.right}</span><span class="hsplit"><i></i></span>
        </div>
        <span class="cornerbox"></span>
      </div>
      <footer class="status">
        <span class="ready">Ready</span>
        <div class="views">
          <button class="cur" aria-label="Normal view">${icons.viewGrid}</button><button aria-label="Page layout view">${icons.viewPage}</button><button aria-label="Page break view">${icons.viewBreak}</button>
        </div>
        <span class="pct">100%</span>
        <div class="zoomer">
          <button aria-label="Zoom out">${icons.minus}</button><span class="track"><span>${icons.thumb}</span></span><button aria-label="Zoom in">${icons.plus}</button>
        </div>
      </footer>
    `;
  }
}
